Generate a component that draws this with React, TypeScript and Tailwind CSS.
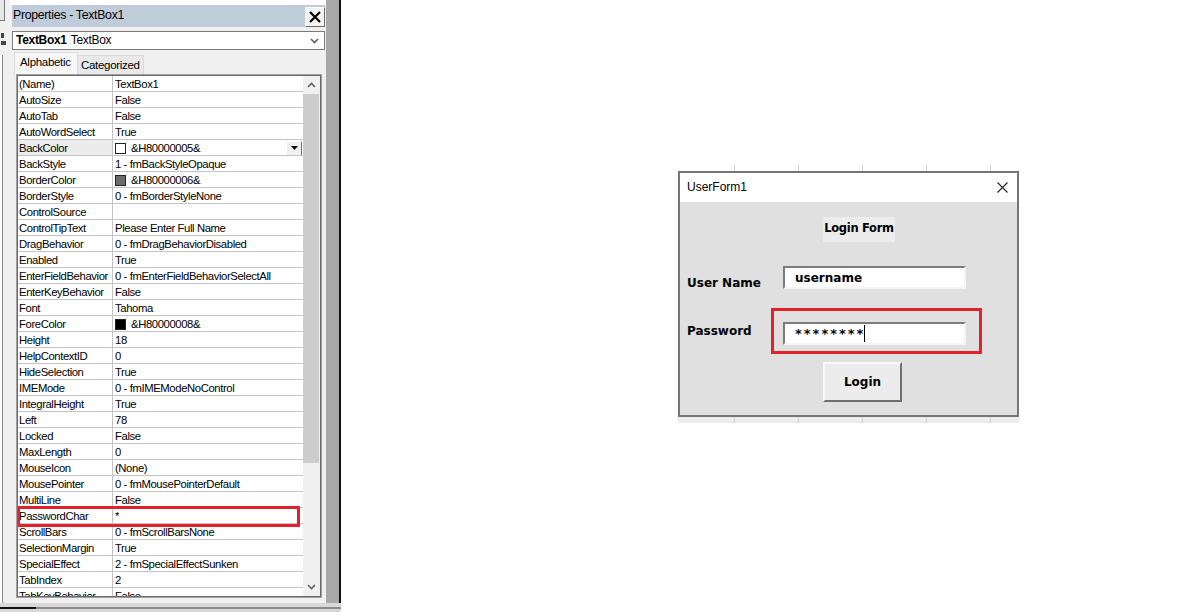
import clsx from "clsx";

type Prop = {
  name: string;
  value: string;
  swatch?: string;
  dropdown?: boolean;
  selected?: boolean;
};

const props: Prop[] = [
  { name: "(Name)", value: "TextBox1" },
  { name: "AutoSize", value: "False" },
  { name: "AutoTab", value: "False" },
  { name: "AutoWordSelect", value: "True" },
  { name: "BackColor", value: "&H80000005&", swatch: "#ffffff", dropdown: true, selected: true },
  { name: "BackStyle", value: "1 - fmBackStyleOpaque" },
  { name: "BorderColor", value: "&H80000006&", swatch: "#6b6b6b" },
  { name: "BorderStyle", value: "0 - fmBorderStyleNone" },
  { name: "ControlSource", value: "" },
  { name: "ControlTipText", value: "Please Enter Full Name" },
  { name: "DragBehavior", value: "0 - fmDragBehaviorDisabled" },
  { name: "Enabled", value: "True" },
  { name: "EnterFieldBehavior", value: "0 - fmEnterFieldBehaviorSelectAll" },
  { name: "EnterKeyBehavior", value: "False" },
  { name: "Font", value: "Tahoma" },
  { name: "ForeColor", value: "&H80000008&", swatch: "#000000" },
  { name: "Height", value: "18" },
  { name: "HelpContextID", value: "0" },
  { name: "HideSelection", value: "True" },
  { name: "IMEMode", value: "0 - fmIMEModeNoControl" },
  { name: "IntegralHeight", value: "True" },
  { name: "Left", value: "78" },
  { name: "Locked", value: "False" },
  { name: "MaxLength", value: "0" },
  { name: "MouseIcon", value: "(None)" },
  { name: "MousePointer", value: "0 - fmMousePointerDefault" },
  { name: "MultiLine", value: "False" },
  { name: "PasswordChar", value: "*" },
  { name: "ScrollBars", value: "0 - fmScrollBarsNone" },
  { name: "SelectionMargin", value: "True" },
  { name: "SpecialEffect", value: "2 - fmSpecialEffectSunken" },
  { name: "TabIndex", value: "2" },
  { name: "TabKeyBehavior", value: "False" },
];

function Chevron({ up }: { up?: boolean }) {
  return (
    <svg width="9" height="6" viewBox="0 0 9 6">
      <polyline
        points={up ? "1,5 4.5,1.5 8,5" : "1,1 4.5,4.5 8,1"}
        fill="none"
        stroke="#606060"
        strokeWidth="1.6"
      />
    </svg>
  );
}

function PropertiesWindow() {
  return (
    <div className="w-[316px] h-full bg-[#f0f0f0] pl-[2px] flex flex-col">
      <div className="h-[5px] bg-white -ml-[2px]" />
      {/* title bar */}
      <div className="h-[22px] w-[313px] bg-[#bfcddb] flex">
        <span className="pl-[1px] pt-[3px] text-[12.3px] leading-[15px] text-black">
          Properties - TextBox1
        </span>
        <div className="ml-auto mt-[2px] w-[20px] h-[20px] bg-[#f4f4f4] border border-t-white border-l-white border-b-[#6a6a6a] border-r-[#6a6a6a] flex items-center justify-center">
          <svg width="12" height="12" viewBox="0 0 12 12">
            <path d="M1 1 L11 11 M11 1 L1 11" stroke="#000" strokeWidth="2.2" />
          </svg>
        </div>
      </div>
      {/* object dropdown */}
      <div className="mt-[4px] h-[19px] w-[313px] bg-white border border-[#7a7a7a] flex items-center pl-[3px]">
        <span className="font-bold text-[12px] leading-[15px]">TextBox1</span>
        <span className="ml-[4px] text-[12px] leading-[15px]">TextBox</span>
        <div className="ml-auto mr-[5px]">
          <Chevron />
        </div>
      </div>
      {/* tabs */}
      <div className="mt-[2px] h-[22px] flex items-end pl-[2px]">
        <div className="w-[64px] h-[22px] bg-[#f7f7f7] border border-b-0 border-[#d9d9d9] pl-[5px] pt-[2px] text-[11.5px] leading-[15px]">
          Alphabetic
        </div>
        <div className="w-[66px] h-[19px] bg-[#e9e9e9] border border-l-0 border-b-0 border-[#d9d9d9] pl-[3px] pt-[2px] text-[11.5px] leading-[15px]">
          Categorized
        </div>
      </div>
      {/* property grid */}
      <div className="ml-[4px] w-[306px] h-[524px] border border-[#a0a0a0] bg-white">
        <div className="w-full h-full border border-[#6a6a6a] flex overflow-hidden">
          <div className="relative w-[285px]">
            {props.map((p) => (
              <div
                key={p.name}
                className="flex h-[16px] border-b border-[#c4c4c4] text-[11.3px] tracking-[-0.4px] leading-[15px]"
              >
                <div
                  className={clsx(
                    "w-[95px] pl-[1px] pt-[1px] border-r border-[#c4c4c4] whitespace-nowrap overflow-hidden",
                    p.selected && "bg-[#ececec]",
                  )}
                >
                  {p.name}
                </div>
                <div className="flex-1 flex items-center pl-[2px] pt-[1px] whitespace-nowrap overflow-hidden">
                  {p.swatch && (
                    <span
                      className="w-[11px] h-[11px] border border-[#222] mr-[5px] shrink-0"
                      style={{ backgroundColor: p.swatch }}
                    />
                  )}
                  <span>{p.value}</span>
                  {p.dropdown && (
                    <div className="ml-auto mr-[1px] w-[16px] h-[15px] bg-[#f0f0f0] border border-t-white border-l-white border-b-[#707070] border-r-[#707070] flex items-center justify-center">
                      <svg width="7" height="4" viewBox="0 0 7 4">
                        <polygon points="0,0 7,0 3.5,4" fill="#000" />
                      </svg>
                    </div>
                  )}
                </div>
              </div>
            ))}
            <div className="absolute left-[-1px] top-[430px] w-[283px] h-[21px] border-[3px] border-[#e3212a]" />
          </div>
          {/* scrollbar */}
          <div className="w-[16px] h-full bg-[#f0f0f0] flex flex-col">
            <div className="h-[18px] flex items-center justify-center">
              <Chevron up />
            </div>
            <div className="h-[369px] bg-[#cdcdcd]" />
            <div className="flex-1" />
            <div className="h-[18px] flex items-center justify-center">
              <Chevron />
            </div>
          </div>
          <div className="flex-1 bg-[#f0f0f0]" />
        </div>
      </div>
    </div>
  );
}

function TickStrip({ filled }: { filled?: boolean }) {
  return (
    <div
      className={clsx(
        "flex w-[341px] h-[6px] overflow-hidden",
        filled && "bg-[#ececec]",
      )}
    >
      <div className="w-[56px] shrink-0" />
      {[0, 1, 2, 3, 4].map((i) => (
        <div key={i} className="w-[64px] shrink-0 border-l border-[#cfcfcf]" />
      ))}
    </div>
  );
}

function TextField({ children }: { children: React.ReactNode }) {
  return (
    <div className="w-[183px] h-[23px] bg-white border-2 border-t-[#7c7c7c] border-l-[#7c7c7c] border-b-[#f4f4f4] border-r-[#f4f4f4] flex items-center pl-[10px]">
      {children}
    </div>
  );
}

function UserForm() {
  return (
    <div className="ml-[337px] mt-[165px]">
      <TickStrip />
      <div className="w-[341px] border-2 border-[#767676] bg-[#e0e0e0] font-['DejaVu_Sans',sans-serif] tracking-normal">
        <div className="h-[29px] bg-white flex items-center pl-[7px] pr-[9px] font-['Liberation_Sans',sans-serif]">
          <span className="text-[12px] text-black -mt-[1px]">UserForm1</span>
          <svg className="ml-auto" width="11" height="11" viewBox="0 0 11 11">
            <path d="M0.5 0.5 L10.5 10.5 M10.5 0.5 L0.5 10.5" stroke="#222" strokeWidth="1.1" />
          </svg>
        </div>
        <div className="pt-[15px] pb-[13px] text-[12px] leading-[14px] font-bold text-black">
          <div className="ml-[143px] w-[72px] h-[25px] bg-[#ececec] flex items-center justify-center whitespace-nowrap text-[11.5px] tracking-[-0.3px] pb-[4px]">
            Login Form
          </div>
          <div className="mt-[24px] h-[23px] flex">
            <div className="w-[103px] pl-[7px] pt-[10px] whitespace-nowrap">User Name</div>
            <TextField>username</TextField>
          </div>
          <div className="mt-[19px] h-[46px] flex items-center">
            <div className="w-[91px] pl-[7px] -mt-[1px] whitespace-nowrap">Password</div>
            <div className="w-[211px] h-[46px] border-[3px] border-[#e3212a] pl-[9px] pt-[11px]">
              <TextField>
                <span className="tracking-[2px] text-[13px]">********</span>
                <span className="w-[1px] h-[17px] bg-black -ml-[1px]" />
              </TextField>
            </div>
          </div>
          <div className="mt-[8px] ml-[143px] w-[79px] h-[40px] bg-[#ececec] border-2 border-t-[#fafafa] border-l-[#fafafa] border-b-[#6f6f6f] border-r-[#6f6f6f] flex items-center justify-center">
            Login
          </div>
        </div>
      </div>
      <TickStrip filled />
    </div>
  );
}

export default function App() {
  return (
    <div className="w-[1184px] h-[612px] bg-white flex overflow-hidden font-['Liberation_Sans',sans-serif] tracking-[-0.3px] text-black">
      <div className="w-[341px] h-full flex flex-col">
        <div className="h-[603px] flex">
          {/* edge of neighbouring pane */}
          <div className="w-[10px] h-full bg-[#f0f0f0] flex flex-col">
            <div className="w-[5px] h-[21px] bg-[#e6e6e6] border-r border-b border-[#7a7a7a]" />
            <div className="mt-[12px] w-[6px] h-[16px] flex flex-col items-start gap-[3px] pl-[1px]">
              <div className="w-[3px] h-[5px] bg-[#444]" />
              <div className="w-[5px] h-[4px] bg-[#444]" />
            </div>
            <div className="mt-[6px] w-[3px] flex-1 bg-white border-r border-[#8a8a8a]" />
          </div>
          <PropertiesWindow />
          <div className="w-[13px] h-full bg-[#a8a8a8]" />
          <div className="w-[2px] h-full bg-[#111]" />
        </div>
        <div className="flex-1 bg-[#d8d8d8] flex flex-col justify-center">
          <div className="h-[2px] flex">
            <div className="w-[36px] bg-[#111]" />
            <div className="flex-1 bg-[#8a8a8a]" />
          </div>
        </div>
      </div>
      <div className="flex-1">
        <UserForm />
      </div>
    </div>
  );
}
